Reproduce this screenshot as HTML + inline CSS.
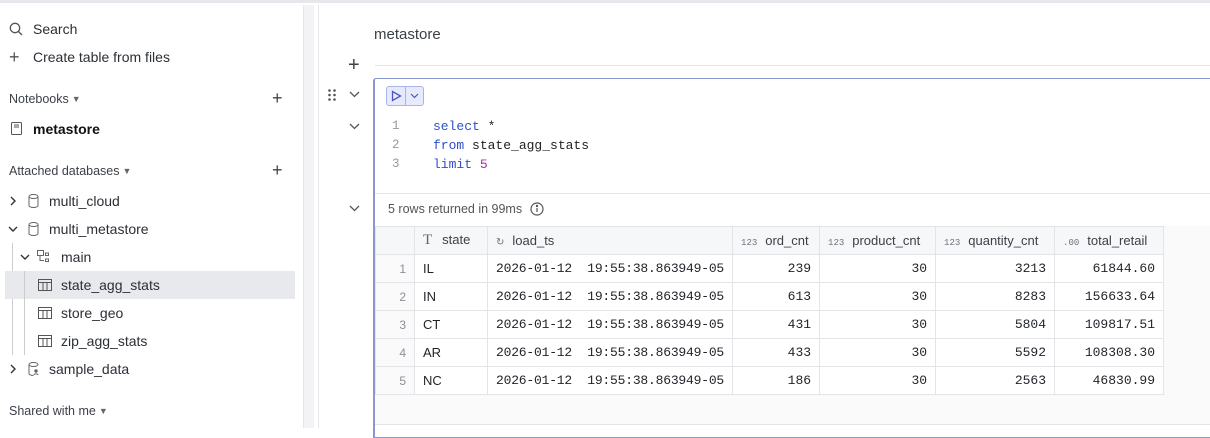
<!DOCTYPE html>
<html><head><style>
*{box-sizing:border-box;margin:0;padding:0}
body{width:1210px;height:428px;overflow:hidden;background:#fff;font-family:"Liberation Sans",sans-serif;color:#1f2328;position:relative;font-size:14px}
.a{position:absolute;white-space:nowrap}
.sb{font-size:14px;color:#2b2f36}
.mono{font-family:"Liberation Mono",monospace}
.ic{position:absolute}
table{border-collapse:collapse;position:absolute;left:375px;top:226px;background:#fff;font-size:13px}
td,th{border:1px solid #e3e4e8;height:28px;padding:0 8px;white-space:pre}
th{background:#f6f7f9;font-weight:normal;text-align:left;color:#3c4048;font-size:13px}
td.n{text-align:right;color:#8a8f98;font-size:12px;background:#fafafb}
td.m{font-family:"Liberation Mono",monospace;font-size:13px}
td.r{text-align:right}
.t{font-size:9px;color:#6b707a;margin-right:8px;font-family:"Liberation Mono",monospace}
.cr{font-size:9px;color:#666;margin-left:3px;vertical-align:1px}
</style></head><body>
<div class="a" style="left:0;top:0;width:1210px;height:3px;background:#e6e7eb"></div>
<!-- sidebar -->
<svg class="ic" style="left:9px;top:22px" width="14" height="14" viewBox="0 0 14 14" fill="none" stroke="#555" stroke-width="1.3"><circle cx="6" cy="6" r="4.7"/><path d="M9.5 9.5L13 13"/></svg>
<div class="a sb" style="left:33px;top:21px">Search</div>
<div class="a" style="left:9px;top:47px;font-size:18px;color:#555">+</div>
<div class="a sb" style="left:33px;top:49px">Create table from files</div>
<div class="a" style="left:9px;top:92px;font-size:12.5px;color:#3c4048">Notebooks<span class="cr">▼</span></div>
<div class="a" style="left:272px;top:88px;font-size:18px;color:#444">+</div>
<svg class="ic" style="left:11px;top:122px" width="11" height="13" viewBox="0 0 11 13" fill="none" stroke="#555"><rect x="0.5" y="0.5" width="10" height="12" rx="1"/><path d="M3 3h5M3 5h5" /></svg>
<div class="a" style="left:33px;top:121px;font-weight:bold;font-size:14px;color:#111">metastore</div>
<div class="a" style="left:9px;top:164px;font-size:12.5px;color:#3c4048">Attached databases<span class="cr">▼</span></div>
<div class="a" style="left:272px;top:160px;font-size:18px;color:#444">+</div>
<svg class="ic" style="left:8px;top:196px" width="10" height="10" viewBox="0 0 10 10" fill="none" stroke="#333" stroke-width="1.4"><path d="M3 1l4 4-4 4"/></svg>
<svg class="ic" style="left:28px;top:194px" width="11" height="14" viewBox="0 0 11 14" fill="none" stroke="#666"><ellipse cx="5.5" cy="2.5" rx="4.5" ry="2"/><path d="M1 2.5v9c0 1.2 2 2 4.5 2s4.5-.8 4.5-2v-9"/></svg>
<div class="a sb" style="left:49px;top:193px">multi_cloud</div>
<svg class="ic" style="left:8px;top:224px" width="10" height="10" viewBox="0 0 10 10" fill="none" stroke="#333" stroke-width="1.4"><path d="M1 3l4 4 4-4"/></svg>
<svg class="ic" style="left:28px;top:222px" width="11" height="14" viewBox="0 0 11 14" fill="none" stroke="#666"><ellipse cx="5.5" cy="2.5" rx="4.5" ry="2"/><path d="M1 2.5v9c0 1.2 2 2 4.5 2s4.5-.8 4.5-2v-9"/></svg>
<div class="a sb" style="left:49px;top:221px">multi_metastore</div>
<div class="a" style="left:12px;top:243px;width:1px;height:112px;background:#ccc"></div>
<svg class="ic" style="left:20px;top:252px" width="10" height="10" viewBox="0 0 10 10" fill="none" stroke="#333" stroke-width="1.4"><path d="M1 3l4 4 4-4"/></svg>
<svg class="ic" style="left:37px;top:250px" width="14" height="14" viewBox="0 0 14 14" fill="none" stroke="#666"><rect x="0.5" y="0.5" width="6" height="5"/><path d="M3 5.5v5h4"/><rect x="8.5" y="3" width="3" height="2.5"/><rect x="8.5" y="9" width="3" height="2.5"/></svg>
<div class="a sb" style="left:61px;top:249px">main</div>
<div class="a" style="left:5px;top:271px;width:290px;height:28px;background:#e8e9ec"></div>
<div class="a" style="left:24px;top:271px;width:1px;height:84px;background:#ccc"></div>
<svg class="ic" style="left:38px;top:279px" width="14" height="12" viewBox="0 0 14 12" fill="none" stroke="#555"><rect x="0.5" y="0.5" width="13" height="11"/><path d="M0.5 3.5h13M5 3.5v8M9 3.5v8"/></svg>
<div class="a sb" style="left:61px;top:277px">state_agg_stats</div>
<svg class="ic" style="left:38px;top:307px" width="14" height="12" viewBox="0 0 14 12" fill="none" stroke="#555"><rect x="0.5" y="0.5" width="13" height="11"/><path d="M0.5 3.5h13M5 3.5v8M9 3.5v8"/></svg>
<div class="a sb" style="left:61px;top:305px">store_geo</div>
<svg class="ic" style="left:38px;top:335px" width="14" height="12" viewBox="0 0 14 12" fill="none" stroke="#555"><rect x="0.5" y="0.5" width="13" height="11"/><path d="M0.5 3.5h13M5 3.5v8M9 3.5v8"/></svg>
<div class="a sb" style="left:61px;top:333px">zip_agg_stats</div>
<svg class="ic" style="left:8px;top:364px" width="10" height="10" viewBox="0 0 10 10" fill="none" stroke="#333" stroke-width="1.4"><path d="M3 1l4 4-4 4"/></svg>
<svg class="ic" style="left:28px;top:362px" width="11" height="14" viewBox="0 0 11 14" fill="none" stroke="#666"><ellipse cx="5.5" cy="2.5" rx="4.5" ry="2"/><path d="M1 2.5v9c0 1.2 2 2 4.5 2"/><circle cx="8" cy="9" r="1.2" fill="#666"/><path d="M6 13c0-1.5 4-1.5 4 0"/></svg>
<div class="a sb" style="left:49px;top:361px">sample_data</div>
<div class="a" style="left:9px;top:404px;font-size:12.5px;color:#3c4048">Shared with me<span class="cr">▼</span></div>
<!-- dividers -->
<div class="a" style="left:303px;top:5px;width:11px;height:423px;background:#f3f3f5;border-left:1px solid #e6e6ea"></div>
<div class="a" style="left:318px;top:5px;width:1px;height:423px;background:#e6e6ea"></div>
<!-- main -->
<div class="a" style="left:374px;top:26px;font-size:15px;color:#3c4048">metastore</div>
<div class="a" style="left:348px;top:54px;font-size:20px;color:#444;font-weight:300">+</div>
<div class="a" style="left:375px;top:65px;width:835px;height:1px;background:#e3e4e8"></div>
<svg class="ic" style="left:328px;top:89px" width="8" height="12" viewBox="0 0 8 12" fill="#555"><circle cx="1.5" cy="1.5" r="1.3"/><circle cx="6.5" cy="1.5" r="1.3"/><circle cx="1.5" cy="6" r="1.3"/><circle cx="6.5" cy="6" r="1.3"/><circle cx="1.5" cy="10.5" r="1.3"/><circle cx="6.5" cy="10.5" r="1.3"/></svg>
<svg class="ic" style="left:349px;top:91px" width="11" height="7" viewBox="0 0 11 7" fill="none" stroke="#555" stroke-width="1.3"><path d="M1 1l4.5 4.5L10 1"/></svg>
<svg class="ic" style="left:349px;top:123px" width="11" height="7" viewBox="0 0 11 7" fill="none" stroke="#555" stroke-width="1.3"><path d="M1 1l4.5 4.5L10 1"/></svg>
<svg class="ic" style="left:349px;top:205px" width="11" height="7" viewBox="0 0 11 7" fill="none" stroke="#555" stroke-width="1.3"><path d="M1 1l4.5 4.5L10 1"/></svg>
<!-- cell -->
<div class="a" style="left:373px;top:78px;width:840px;height:360px;border:1px solid #8b97d0;border-left:2px solid #8b97d0;border-radius:3px 0 0 0;background:#fff"></div>
<div class="a" style="left:386px;top:86px;width:38px;height:20px;border:1px solid #a9b5ea;border-radius:3px;background:#e6eafc"></div>
<div class="a" style="left:405px;top:86px;width:1px;height:20px;background:#a9b5ea"></div>
<svg class="ic" style="left:391px;top:90px" width="11" height="12" viewBox="0 0 11 12" fill="none" stroke="#4a57c0" stroke-width="1.3"><path d="M1.5 1.5v9l8-4.5z"/></svg>
<svg class="ic" style="left:410px;top:93px" width="9" height="6" viewBox="0 0 9 6" fill="none" stroke="#4a57c0" stroke-width="1.2"><path d="M1 1l3.5 3.5L8 1"/></svg>
<div class="a mono" style="left:392px;top:117px;font-size:12.5px;line-height:19px;color:#999">1<br>2<br>3</div>
<div class="a mono" style="left:433px;top:117px;font-size:13px;line-height:19px;color:#222"><span style="color:#2f4fc9">select</span> *<br><span style="color:#2f4fc9">from</span> state_agg_stats<br><span style="color:#2f4fc9">limit</span> <span style="color:#a02fa0">5</span></div>
<div class="a" style="left:375px;top:193px;width:835px;height:1px;background:#e6e7eb"></div>
<div class="a" style="left:375px;top:226px;width:835px;height:198px;background:#fafafa"></div>
<div class="a" style="left:375px;top:424px;width:835px;height:1px;background:#e3e4e8"></div>
<div class="a" style="left:388px;top:202px;font-size:12.5px;color:#555">5 rows returned in 99ms</div>
<svg class="ic" style="left:530px;top:202px" width="14" height="14" viewBox="0 0 14 14" fill="none" stroke="#555" stroke-width="1.2"><circle cx="7" cy="7" r="6"/><path d="M7 6v4"/><circle cx="7" cy="4" r=".6" fill="#555"/></svg>
<table>
<tr><th style="width:39px"></th><th style="width:73px"><span style="font-family:'Liberation Serif',serif;font-size:15px;color:#666;margin-right:10px">T</span>state</th><th style="width:243px"><span class="t" style="font-size:10px">↻</span>load_ts</th><th style="width:87px"><span class="t">123</span>ord_cnt</th><th style="width:116px"><span class="t">123</span>product_cnt</th><th style="width:119px"><span class="t">123</span>quantity_cnt</th><th style="width:109px"><span class="t">.00</span>total_retail</th></tr>
<tr><td class="n">1</td><td>IL</td><td class="m" style="letter-spacing:-0.2px">2026-01-12  19:55:38.863949-05</td><td class="m r">239</td><td class="m r">30</td><td class="m r">3213</td><td class="m r">61844.60</td></tr>
<tr><td class="n">2</td><td>IN</td><td class="m" style="letter-spacing:-0.2px">2026-01-12  19:55:38.863949-05</td><td class="m r">613</td><td class="m r">30</td><td class="m r">8283</td><td class="m r">156633.64</td></tr>
<tr><td class="n">3</td><td>CT</td><td class="m" style="letter-spacing:-0.2px">2026-01-12  19:55:38.863949-05</td><td class="m r">431</td><td class="m r">30</td><td class="m r">5804</td><td class="m r">109817.51</td></tr>
<tr><td class="n">4</td><td>AR</td><td class="m" style="letter-spacing:-0.2px">2026-01-12  19:55:38.863949-05</td><td class="m r">433</td><td class="m r">30</td><td class="m r">5592</td><td class="m r">108308.30</td></tr>
<tr><td class="n">5</td><td>NC</td><td class="m" style="letter-spacing:-0.2px">2026-01-12  19:55:38.863949-05</td><td class="m r">186</td><td class="m r">30</td><td class="m r">2563</td><td class="m r">46830.99</td></tr>
</table>
</body></html>
